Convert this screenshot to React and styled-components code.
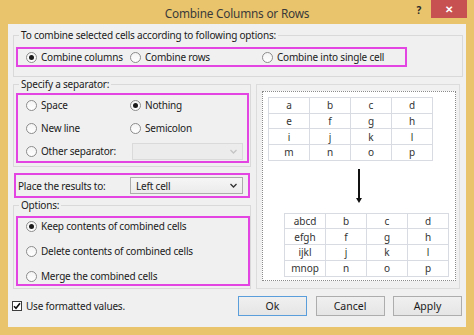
import React from "react";
import styled, { createGlobalStyle } from "styled-components";

const GlobalStyle = createGlobalStyle`
  html, body {
    margin: 0;
    padding: 0;
    background: #ffffff;
  }
`;

const Window = styled.div`
  width: 474px;
  height: 335px;
  background: #e9c46c;
  display: flex;
  flex-direction: column;
  font-family: "Noto Sans", "Open Sans", sans-serif;
  font-size: 10px;
  letter-spacing: -0.2px;
  color: #1b1b1b;
`;

const TitleBar = styled.div`
  height: 24px;
  flex: none;
  display: grid;
  grid-template-columns: 1fr auto 1fr;
`;

const Title = styled.div`
  grid-column: 2;
  font-size: 11.8px;
  line-height: 27px;
  color: #3a3a3a;
`;

const Controls = styled.div`
  grid-column: 3;
  justify-self: end;
  display: flex;
  align-items: flex-start;
  margin-right: 7px;
`;

const HelpButton = styled.div`
  font-weight: bold;
  font-size: 10px;
  line-height: 20px;
  color: #2a2a2a;
  margin-right: 10px;
`;

const CloseButton = styled.div`
  width: 36px;
  height: 18px;
  background: #c75050;
  color: #fff;
  font-size: 10px;
  font-weight: bold;
  display: flex;
  align-items: center;
  justify-content: center;
`;

const Client = styled.div`
  flex: 1;
  margin: 0 8px 8px;
  background: #f0f0f0;
  display: flex;
  flex-direction: column;
  padding: 4px 3px 0 5px;
`;

const Group = styled.fieldset`
  margin: 0;
  min-width: 0;
  border: 1px solid #d9d9d9;
  padding: ${(p) => p.$pad || "0"};
`;

const Legend = styled.legend`
  padding: 0 2px;
  margin-left: 3px;
  line-height: 14px;
`;

const Highlight = styled.div`
  border: 2px solid #e245e2;
  padding-left: ${(p) => p.$padLeft || "8px"};
  margin-left: ${(p) => p.$ml || "0"};
  margin-top: ${(p) => p.$mt || "0"};
  width: ${(p) => p.$width || "auto"};
  height: ${(p) => p.$height};
  box-sizing: border-box;
`;

const OptionRow = styled.div`
  height: 100%;
  display: grid;
  grid-template-columns: ${(p) => p.$cols};
  align-items: center;
`;

const OptionGrid = styled.div`
  height: 100%;
  display: grid;
  grid-template-columns: 104px 1fr;
  grid-template-rows: repeat(3, 20px);
  align-content: space-between;
  align-items: center;
`;

const OptionList = styled.div`
  height: 100%;
  display: flex;
  flex-direction: column;
  justify-content: space-between;
  padding: 1px 0;
  box-sizing: border-box;
`;

const RadioLabel = styled.label`
  display: flex;
  align-items: center;
  white-space: nowrap;
  line-height: 14px;
`;

const RadioCircle = styled.span`
  width: 11px;
  height: 11px;
  flex: none;
  border-radius: 50%;
  border: 1px solid #8c8c8c;
  background: linear-gradient(#f4f4f4, #ffffff);
  box-sizing: border-box;
  display: inline-flex;
  align-items: center;
  justify-content: center;
  margin-right: 4px;
  &::after {
    content: "";
    width: 5px;
    height: 5px;
    border-radius: 50%;
    background: #1a1a1a;
    display: ${(p) => (p.$checked ? "block" : "none")};
  }
`;

const Radio = ({ checked, children }) => (
  <RadioLabel>
    <RadioCircle $checked={checked} />
    {children}
  </RadioLabel>
);

const Combo = styled.div`
  width: ${(p) => p.$width};
  height: 17px;
  margin-left: ${(p) => p.$ml || "0"};
  box-sizing: border-box;
  border: 1px solid ${(p) => (p.$disabled ? "#dadada" : "#acacac")};
  background: ${(p) =>
    p.$disabled ? "#ececec" : "linear-gradient(#f6f6f6, #ebebeb)"};
  display: flex;
  align-items: center;
  justify-content: space-between;
  padding: 0 5px 0 5px;
  color: #1b1b1b;
`;

const Chevron = ({ color }) => (
  <svg width="7" height="5" viewBox="0 0 7 5">
    <path d="M0.5 1 L3.5 4 L6.5 1" fill="none" stroke={color} strokeWidth="1.3" />
  </svg>
);

const MainRow = styled.div`
  display: flex;
  gap: 5px;
`;

const LeftColumn = styled.div`
  width: 238px;
  display: flex;
  flex-direction: column;
`;

const PlaceRow = styled.div`
  display: flex;
  align-items: center;
  justify-content: space-between;
  padding: 0 5px 0 2px;
  height: 100%;
`;

const PreviewPanel = styled.div`
  margin-top: 7px;
  height: 205px;
  width: 204px;
  box-sizing: border-box;
  border: 1px solid #dcdcdc;
  padding: 6px 3px 7px 5px;
`;

const Preview = styled.div`
  height: 100%;
  box-sizing: border-box;
  border: 1px dotted #8a8a8a;
  background: #ffffff;
  display: flex;
  flex-direction: column;
  padding: 5px 6px 0 5px;
`;

const Table = styled.table`
  border-collapse: collapse;
  width: 165px;
  align-self: ${(p) => p.$align};
  td {
    border: 1px solid #d9dbe3;
    height: 14.7px;
    padding: 0;
    text-align: center;
    font-size: 10px;
    line-height: 12px;
    letter-spacing: 0;
    color: #333;
    width: 25%;
  }
`;

const Arrow = styled.svg`
  align-self: center;
  margin: 8px 0 10px;
`;

const BottomRow = styled.div`
  display: flex;
  align-items: center;
  padding: 7px 1px 10px 0;
`;

const CheckLabel = styled.label`
  display: flex;
  align-items: center;
  margin-left: -1px;
`;

const CheckBox = styled.span`
  width: 10px;
  height: 10px;
  box-sizing: border-box;
  border: 1px solid #3c3c3c;
  background: #fff;
  display: inline-flex;
  align-items: center;
  justify-content: center;
  margin-right: 4px;
`;

const ButtonBar = styled.div`
  margin-left: auto;
  display: flex;
  gap: 8.5px;
`;

const Button = styled.button`
  width: 69px;
  height: 20px;
  box-sizing: border-box;
  border: 1px solid ${(p) => (p.$primary ? "#5a9fdb" : "#adadad")};
  background: linear-gradient(#f0f0f0, #e5e5e5);
  font-family: "Noto Sans", "Open Sans", sans-serif;
  font-size: 10.5px;
  color: #1b1b1b;
  padding: 0;
`;

const before = [
  ["a", "b", "c", "d"],
  ["e", "f", "g", "h"],
  ["i", "j", "k", "l"],
  ["m", "n", "o", "p"],
];

const after = [
  ["abcd", "b", "c", "d"],
  ["efgh", "f", "g", "h"],
  ["ijkl", "j", "k", "l"],
  ["mnop", "n", "o", "p"],
];

const Grid = ({ rows, align }) => (
  <Table $align={align}>
    <tbody>
      {rows.map((r, i) => (
        <tr key={i}>
          {r.map((c, j) => (
            <td key={j}>{c}</td>
          ))}
        </tr>
      ))}
    </tbody>
  </Table>
);

export default function App() {
  return (
    <>
      <GlobalStyle />
      <Window>
        <TitleBar>
          <Title>Combine Columns or Rows</Title>
          <Controls>
            <HelpButton>?</HelpButton>
            <CloseButton>✕</CloseButton>
          </Controls>
        </TitleBar>
        <Client>
          <Group $pad="5px 0 9px 2px">
            <Legend>To combine selected cells according to following options:</Legend>
            <Highlight $width="391px" $height="20px">
              <OptionRow $cols="104px 132px 1fr">
                <Radio checked>Combine columns</Radio>
                <Radio>Combine rows</Radio>
                <Radio>Combine into single cell</Radio>
              </OptionRow>
            </Highlight>
          </Group>

          <MainRow>
            <LeftColumn>
              <Group $pad="2px 1px 3px 2px">
                <Legend>Specify a separator:</Legend>
                <Highlight $height="70px">
                  <OptionGrid>
                    <Radio>Space</Radio>
                    <Radio checked>Nothing</Radio>
                    <Radio>New line</Radio>
                    <Radio>Semicolon</Radio>
                    <Radio>Other separator:</Radio>
                    <Combo $disabled $width="111px" $ml="2px">
                      <span />
                      <Chevron color="#c4c4c4" />
                    </Combo>
                  </OptionGrid>
                </Highlight>
              </Group>

              <Highlight $padLeft="0" $ml="1px" $mt="6px" $width="236px" $height="25px">
                <PlaceRow>
                  <span>Place the results to:</span>
                  <Combo $width="113px">
                    <span>Left cell</span>
                    <Chevron color="#333" />
                  </Combo>
                </PlaceRow>
              </Highlight>

              <Group $pad="4px 0 2px 2px">
                <Legend>Options:</Legend>
                <Highlight $height="70px">
                  <OptionList>
                    <Radio checked>Keep contents of combined cells</Radio>
                    <Radio>Delete contents of combined cells</Radio>
                    <Radio>Merge the combined cells</Radio>
                  </OptionList>
                </Highlight>
              </Group>
            </LeftColumn>

            <PreviewPanel>
              <Preview>
                <Grid rows={before} align="flex-start" />
                <Arrow width="8" height="34" viewBox="0 0 8 34">
                  <line x1="4" y1="0" x2="4" y2="30" stroke="#111" strokeWidth="2" />
                  <path d="M1 29 L7 29 L4 34 Z" fill="#111" />
                </Arrow>
                <Grid rows={after} align="flex-end" />
              </Preview>
            </PreviewPanel>
          </MainRow>

          <BottomRow>
            <CheckLabel>
              <CheckBox>
                <svg width="8" height="8" viewBox="0 0 8 8">
                  <path d="M1 4.2 L3 6.3 L7 1.2" fill="none" stroke="#111" strokeWidth="1.6" />
                </svg>
              </CheckBox>
              Use formatted values.
            </CheckLabel>
            <ButtonBar>
              <Button $primary>Ok</Button>
              <Button>Cancel</Button>
              <Button>Apply</Button>
            </ButtonBar>
          </BottomRow>
        </Client>
      </Window>
    </>
  );
}
